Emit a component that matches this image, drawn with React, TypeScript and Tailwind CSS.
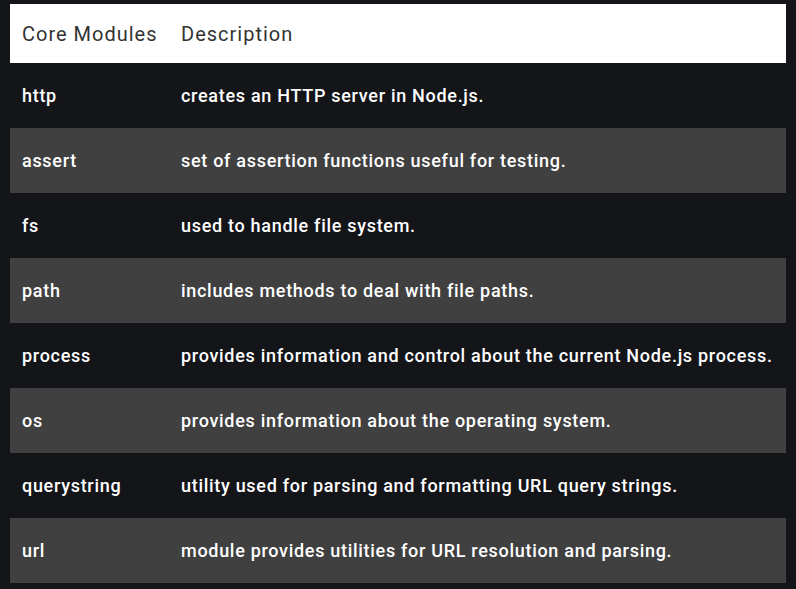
export default function App() {
  const rows: [string, string][] = [
    ["http", "creates an HTTP server in Node.js."],
    ["assert", "set of assertion functions useful for testing."],
    ["fs", "used to handle file system."],
    ["path", "includes methods to deal with file paths."],
    ["process", "provides information and control about the current Node.js process."],
    ["os", "provides information about the operating system."],
    ["querystring", "utility used for parsing and formatting URL query strings."],
    ["url", "module provides utilities for URL resolution and parsing."],
  ];
  return (
    <div className="w-[796px] h-[589px] bg-[#141519] pt-[4px] px-[10px]" style={{ fontFamily: "Roboto, 'Noto Sans', sans-serif" }}>
      <div className="flex h-[59px] items-center bg-white text-[#333] text-[20px] tracking-[1px]">
        <div className="w-[171px] pl-[12px]">Core Modules</div>
        <div>Description</div>
      </div>
      {rows.map(([a, b], i) => (
        <div key={a} className={`flex h-[65px] items-center text-[18px] tracking-[0.7px] font-medium text-white ${i % 2 ? "bg-[#404040]" : "bg-[#141519]"}`}>
          <div className="w-[171px] pl-[12px]">{a}</div>
          <div>{b}</div>
        </div>
      ))}
    </div>
  );
}
